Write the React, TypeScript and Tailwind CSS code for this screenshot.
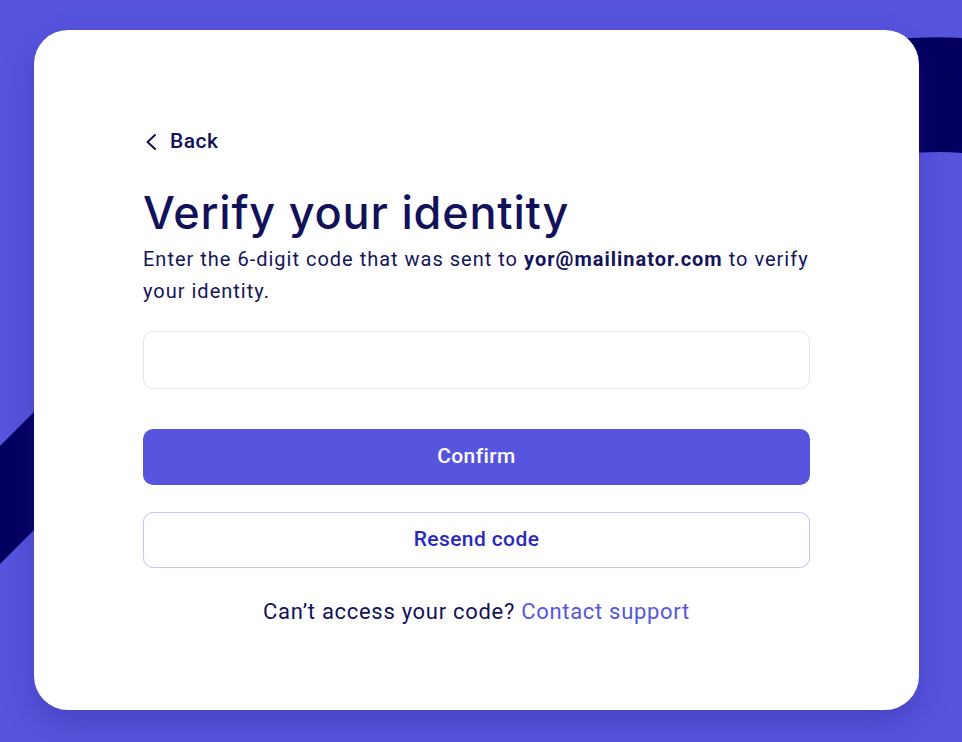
const roboto = { fontFamily: "Roboto, 'Liberation Sans', sans-serif" };

export default function App() {
  return (
    <div
      className="relative w-full min-h-[742px] overflow-hidden bg-[#5755de] flex items-start pt-[30px] pl-[34px]"
      style={roboto}
    >
      {/* decorative shapes */}
      <svg className="absolute inset-0 w-full h-full" viewBox="0 0 962 742" preserveAspectRatio="none">
        <path d="M880 40 Q930 36 962 38 L962 153 Q935 150 890 155 Z" fill="#03005f" />
        <path d="M0 446 L60 386 L60 504 L0 564 Z" fill="#03005f" />
      </svg>

      <div className="relative w-[885px] h-[680px] bg-white rounded-[34px] shadow-[0_12px_30px_rgba(40,30,140,0.35)] px-[109px] pt-[97px]">
        <div className="w-[667px]">
          <button className="flex items-center gap-[13px] text-[#12125a] text-[21px] tracking-[0.5px] font-medium h-[30px]">
            <svg width="12" height="18" viewBox="0 0 12 18" fill="none" className="ml-[2px]">
              <path d="M10 2 L2.5 9 L10 16" stroke="currentColor" strokeWidth="2" strokeLinecap="round" strokeLinejoin="round" />
            </svg>
            Back
          </button>

          <h1
            className="mt-[28px] text-[45px] leading-[56px] font-medium text-[#12125a] tracking-[0.8px]"
            style={{ fontFamily: "Inter, 'Noto Sans', sans-serif" }}
          >
            Verify your identity
          </h1>

          <p className="mt-[2px] text-[20px] leading-[32px] text-[#14145a] tracking-[1px]">
            Enter the 6-digit code that was sent to <span className="font-bold">yor@mailinator.com</span> to verify
            your identity.
          </p>

          <input
            type="text"
            className="mt-[24px] block w-full h-[58px] rounded-[10px] border border-[#e4e4ee] outline-none px-4"
          />

          <button className="mt-[40px] w-full h-[56px] rounded-[10px] bg-[#5755de] text-white text-[21px] tracking-[0.4px] font-medium">
            Confirm
          </button>

          <button className="mt-[27px] w-full h-[56px] rounded-[10px] border border-[#c6c4f7] bg-white text-[#2b29bd] text-[21px] tracking-[0.4px] font-medium">
            Resend code
          </button>

          <p className="mt-[29px] text-center text-[22px] leading-[30px] tracking-[0.7px] text-[#12125a]">
            Can’t access your code? <a className="text-[#5755de]">Contact support</a>
          </p>
        </div>
      </div>
    </div>
  );
}
